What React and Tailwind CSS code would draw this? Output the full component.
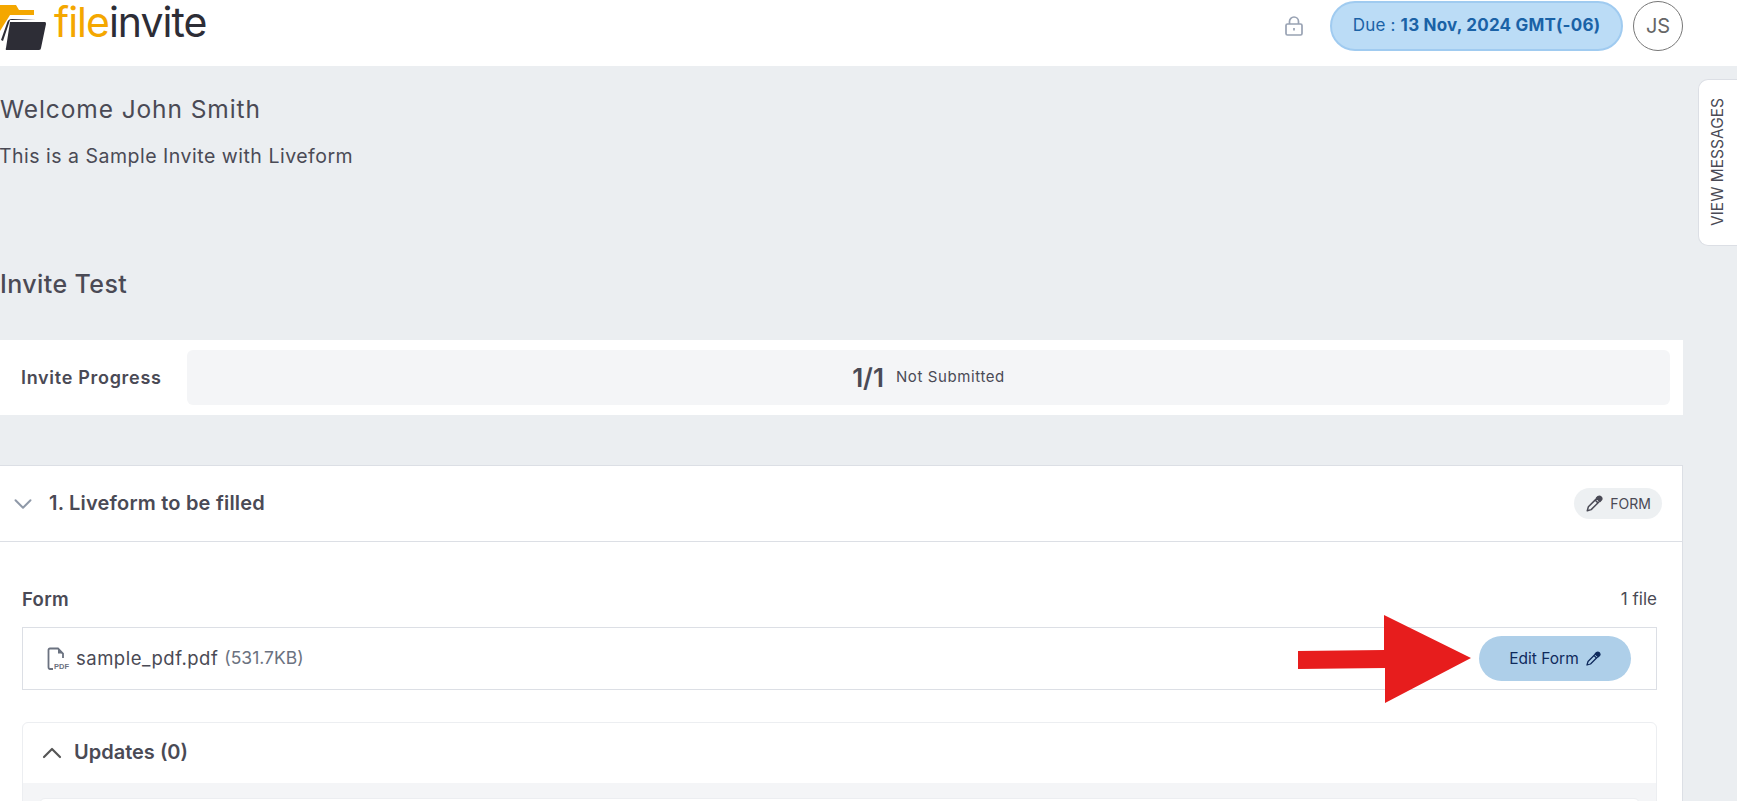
import React from "react";
import { ChevronDown, ChevronUp } from "lucide-react";

function Logo() {
    return (
        <div className="flex items-start h-[50px]">
            <svg width="48" height="50" viewBox="0 0 48 50" className="shrink-0">
                <path d="M-2 4 H16 L19 9 H34 V14 H10 L0 30 H-2 Z" fill="#f4a700" />
                <path d="M3 40 L10 19 H36 L12 18 Q8 18 7 22 L1 39 Z" fill="#2d2d36" />
                <path d="M10 21 H45 Q46 21 46 23 L41 47 Q41 49 39 49 H7 Q5 49 6 47 Z" fill="#2d2d36" />
            </svg>
            <span className="ml-[6px] text-[41px] leading-[42px] tracking-[-1px] font-normal">
                <span className="text-[#f4a700]">file</span>
                <span className="text-[#2d2d36]">invite</span>
            </span>
        </div>
    );
}

function LockIcon() {
    return (
        <svg width="18" height="20" viewBox="0 0 18 20" className="mt-[15px] mr-[27px] shrink-0" fill="none" stroke="#98a2b3" strokeWidth="1.700">
            <rect x="1" y="8" width="16" height="11" rx="1.500" />
            <path d="M4.500 8 V5.500 A4.500 4.500 0 0 1 13.500 5.500 V8" />
            <path d="M9 12 V14.500" />
        </svg>
    );
}

function Pencil({ className }) {
    return (
        <svg viewBox="0 0 16 16" className={className} fill="none" stroke="currentColor" strokeWidth="1.300">
            <path d="M10.500 3 L13 5.500 L5.500 13 L2 14 L3 10.500 Z" strokeLinejoin="round" />
            <path d="M9 4.500 L11.500 7" />
            <path d="M11.500 1.500 Q13 0.500 14.500 2 Q15.500 3.500 14.500 4.500 L13.500 5.500 L10.500 2.500 Z" fill="currentColor" />
        </svg>
    );
}

function PdfIcon() {
    return (
        <svg width="23" height="24" viewBox="0 0 23 24" className="shrink-0">
            <path d="M6 22 H3 Q1.500 22 1.500 20 V3 Q1.500 1.500 3 1.500 H11 L16 6.500 V11" fill="none" stroke="#6b7280" strokeWidth="1.800" />
            <path d="M11 1.500 V6.500 H16 Z" fill="#6b7280" />
            <text x="7" y="22" fontSize="7.500" fontWeight="700" fill="#6b7280" fontFamily="Liberation Sans, sans-serif">PDF</text>
        </svg>
    );
}

export default function App() {
    return (
        <div className="relative h-[801px] w-[1737px] overflow-hidden bg-[#ebeef1] font-['Inter',sans-serif] text-[#4a4a55]">
            {/* ヘッダー */}
            <header className="h-[66px] bg-white flex justify-between pr-[54px] pt-[1px]">
                <Logo />
                <div className="flex items-start">
                    <LockIcon />
                    <div className="h-[50px] w-[293px] rounded-full bg-[#bbdcf6] border-2 border-[#a0cbf0] flex items-center justify-center text-[17px] tracking-[0.2px] text-[#1a62a6] whitespace-nowrap">
                        <span>Due :&nbsp;</span>
                        <span className="font-bold">13 Nov, 2024 GMT(-06)</span>
                    </div>
                    <div className="ml-[10px] w-[50px] h-[50px] rounded-full border border-[#777] flex items-center justify-center text-[20px] text-[#666]">
                        JS
                    </div>
                </div>
            </header>

            <main className="w-[1683px]">
                <section className="h-[274px] pt-[28px]">
                    <h1 className="text-[24.500px] leading-[30px] tracking-[0.9px] font-normal">Welcome John Smith</h1>
                    <p className="mt-[19px] text-[19.500px] leading-[26px] tracking-[0.5px] -ml-[1px]">This is a Sample Invite with Liveform</p>
                    <h2 className="mt-[99px] text-[25px] leading-[32px] tracking-[0.4px] font-medium">Invite Test</h2>
                </section>

                {/* 進捗 */}
                <div className="h-[75px] bg-white flex items-center pl-[21px] pr-[13px]">
                    <span className="w-[166px] shrink-0 text-[18px] tracking-[0.7px] font-semibold whitespace-nowrap">Invite Progress</span>
                    <div className="h-[55px] flex-1 bg-[#f4f5f7] rounded-[6px] flex items-center justify-center">
                        <span className="text-[26px] font-semibold mr-[12px]">1/1</span>
                        <span className="text-[15px] tracking-[0.6px]">Not Submitted</span>
                    </div>
                </div>

                {/* フォーム項目 */}
                <div className="mt-[50px] bg-white border-t border-r border-[#dcdfe5] h-[340px]">
                    <div className="h-[76px] border-b border-[#dcdfe5] flex items-center pl-[8px] pr-[20px]">
                        <ChevronDown className="w-[30px] h-[30px] text-[#8f99a8]" strokeWidth={1.600} />
                        <span className="ml-[11px] pb-[2px] text-[20px] tracking-[0.2px] font-semibold flex-1">1. Liveform to be filled</span>
                        <span className="h-[31px] w-[88px] rounded-full bg-[#edf0f2] flex items-center justify-center gap-[7px] text-[14px]">
                            <Pencil className="w-[18px] h-[18px]" />
                            FORM
                        </span>
                    </div>

                    <div className="pl-[22px] pr-[25px]">
                        <div className="flex justify-between items-center mt-[46px] h-[24px]">
                            <span className="text-[18.500px] tracking-[0.3px] font-semibold">Form</span>
                            <span className="text-[17px]">1 file</span>
                        </div>
                        <div className="mt-[15px] h-[63px] border border-[#dcdfe5] flex items-center pl-[24px] pr-[25px]">
                            <PdfIcon />
                            <span className="ml-[6px] text-[18.500px] tracking-[0.5px]">sample_pdf.pdf</span>
                            <span className="ml-[6px] text-[17.500px] text-[#6b7280] flex-1">(531.7KB)</span>
                            <button className="h-[45px] w-[152px] rounded-full bg-[#aecfe9] flex items-center justify-center gap-[6px] text-[15.500px] text-[#0f2a5c]">
                                Edit Form
                                <Pencil className="w-[16px] h-[16px]" />
                            </button>
                        </div>

                        {/* 更新 */}
                        <div className="mt-[32px] border border-[#eceef1] rounded-[6px]">
                            <div className="h-[60px] flex items-center pl-[13px]">
                                <ChevronUp className="w-[32px] h-[32px] text-[#555]" strokeWidth={1.600} />
                                <span className="ml-[6px] pb-[2px] text-[20px] font-semibold">Updates (0)</span>
                            </div>
                            <div className="h-[40px] bg-[#f4f5f7] pt-[15px] px-[16px]">
                                <div className="h-[30px] bg-white border border-[#eceef1] rounded-[6px]" />
                            </div>
                        </div>
                    </div>
                </div>
            </main>

            {/* メッセージタブ */}
            <div className="absolute right-0 top-[79px] w-[39px] h-[167px] bg-white border border-[#dcdfe5] border-r-0 rounded-l-[10px] flex items-center justify-center">
                <span className="[writing-mode:vertical-rl] rotate-180 text-[15.500px] whitespace-nowrap text-[#4a4a55]">
                    VIEW MESSAGES
                </span>
            </div>

            {/* 注釈の矢印 */}
            <svg className="absolute left-[1298px] top-[615px]" width="174" height="88" viewBox="0 0 174 88">
                <path d="M0 36 L86 35 V0 L173 43 L87 88 V53 L0 54 Z" fill="#e71d1d" />
            </svg>
        </div>
    );
}
